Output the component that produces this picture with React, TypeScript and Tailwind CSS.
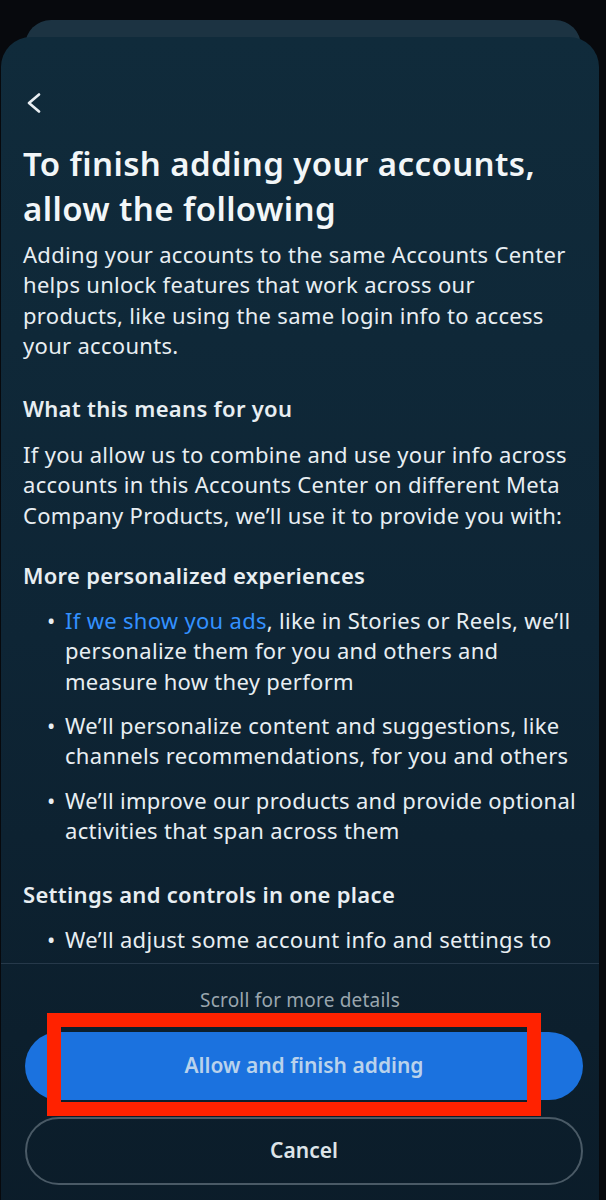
import React from "react";

const bullets1: React.ReactNode[] = [
  <>
    <span className="text-[#3391ff]">If we show you ads</span>, like in Stories or Reels, we’ll personalize them for you and others and measure how they perform
  </>,
  <>We’ll personalize content and suggestions, like channels recommendations, for you and others</>,
  <>We’ll improve our products and provide optional activities that span across them</>,
];

function Bullet({ children }: { children: React.ReactNode }) {
  return (
    <li className="flex pl-[18px]">
      <span className="w-[24px] shrink-0 pl-[6px]">•</span>
      <span>{children}</span>
    </li>
  );
}

export default function App() {
  return (
    <div
      className="relative w-[606px] h-[1200px] overflow-hidden bg-[#07090d] pt-[20px]"
      style={{ fontFamily: '"Noto Sans", "Open Sans", sans-serif' }}
    >
      {/* stacked card behind */}
      <div className="mx-[25px] h-[40px] rounded-t-[26px] bg-[#1c3342]" />
      {/* main card */}
      <div className="relative -mt-[23px] ml-[1px] w-[598px] h-[1200px] rounded-[30px] bg-gradient-to-b from-[#102b3b] via-[#0e2535] to-[#0b1c29] flex flex-col">
        <div className="h-[926px] overflow-hidden pl-[22px] pr-[18px] pt-[56px] text-[#e8eef2]">
          <svg width="18" height="20" viewBox="0 0 18 20" className="ml-[2px]">
            <path d="M14 1.5 L4 10 L14 18.5" fill="none" stroke="#e8eef2" strokeWidth="2.6" strokeLinecap="round" strokeLinejoin="round" />
          </svg>
          <h1 className="mt-[28px] text-[33px] leading-[45px] font-semibold text-[#f2f6f8] tracking-[0.4px]">
            To finish adding your accounts, allow the following
          </h1>
          <p className="mt-[8px] text-[22px] leading-[30.3px] tracking-[0.3px]">
            Adding your accounts to the same Accounts Center helps unlock features that work across our products, like using the same login info to access your accounts.
          </p>
          <h2 className="mt-[33px] text-[22px] leading-[30px] font-semibold tracking-[0.3px]">What this means for you</h2>
          <p className="mt-[16px] text-[22px] leading-[30.3px] tracking-[0.3px]">
            If you allow us to combine and use your info across accounts in this Accounts Center on different Meta Company Products, we’ll use it to provide you with:
          </p>
          <h2 className="mt-[30px] text-[22px] leading-[30px] font-semibold tracking-[0.3px]">More personalized experiences</h2>
          <ul className="mt-[15px] text-[22px] leading-[30.3px] tracking-[0.3px] flex flex-col gap-[14px]">
            {bullets1.map((b, i) => (
              <Bullet key={i}>{b}</Bullet>
            ))}
          </ul>
          <h2 className="mt-[34px] text-[22px] leading-[30px] font-semibold tracking-[0.3px]">Settings and controls in one place</h2>
          <ul className="mt-[15px] h-[31px] overflow-hidden text-[22px] leading-[30.3px] tracking-[0.3px]">
            <Bullet>We’ll adjust some account info and settings to match across accounts</Bullet>
          </ul>
        </div>
        <div className="border-t border-[#26394a] flex flex-col items-center pt-[24px]">
          <div className="text-[19px] leading-[24px] tracking-[0.2px] text-[#9aa6ae]">Scroll for more details</div>
          <div className="self-start ml-[24px] mt-[20px] w-[558px] flex flex-col gap-[17px]">
            <button className="h-[68px] w-full rounded-full bg-[#1b72df] text-[21px] font-semibold text-[#b9d2ec]">
              Allow and finish adding
            </button>
            <button className="h-[68px] w-full rounded-full border-2 border-[#4a5a66] text-[21px] font-semibold text-[#dde4e8]">
              Cancel
            </button>
          </div>
        </div>
      </div>
      {/* red annotation box */}
      <div className="absolute left-[47px] top-[1013px] w-[494px] h-[103px] border-[14px] border-[#ff2200]" />
    </div>
  );
}
